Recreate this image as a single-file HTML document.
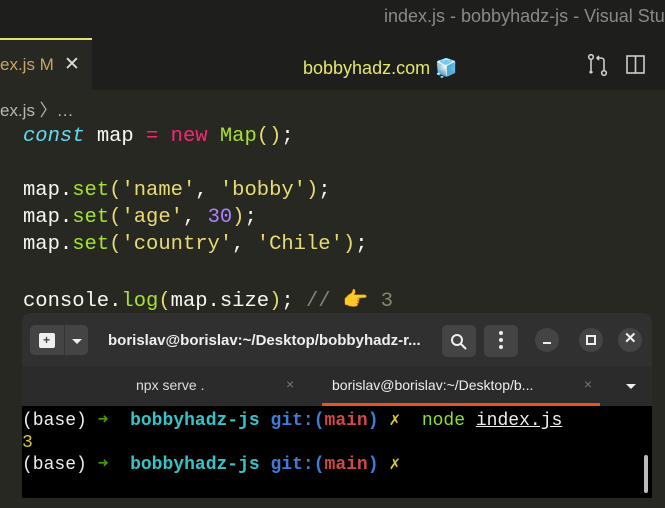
<!DOCTYPE html>
<html><head><style>
body{margin:0;width:665px;height:508px;overflow:hidden;background:#272822;font-family:"Liberation Sans",sans-serif;position:relative}
.abs{position:absolute}
.mono{font-family:"Liberation Mono","DejaVu Sans Mono",monospace}
.code{font-size:20.5px;color:#f8f8f2;white-space:pre;left:23px}
</style></head><body>
<div class="abs" style="left:0;top:0;width:665px;height:38px;background:#1e1f1c"></div>
<div class="abs" style="left:384px;top:6px;font-size:18px;color:#8a8a85;white-space:nowrap">index.js - bobbyhadz-js - Visual Stu</div>
<div class="abs" style="left:0;top:38px;width:665px;height:52px;background:#1e1f1c"></div>
<div class="abs" style="left:0;top:38px;width:92px;height:52px;background:#272822;border-top:2px solid #e2e26a;box-sizing:border-box"></div>
<div class="abs" style="left:0;top:55px;font-size:17px;color:#c9a56a">ex.js&nbsp;M</div>
<div class="abs" style="left:64px;top:53px;font-size:19px;color:#ddd">✕</div>
<div class="abs" style="left:303px;top:58px;font-size:18px;color:#e6e66e">bobbyhadz.com <span style="color:#8cc8ee">🧊</span></div>
<svg class="abs" style="left:586px;top:53px" width="24" height="24" viewBox="0 0 24 24" fill="none" stroke="#ccc" stroke-width="1.6"><circle cx="5" cy="4" r="2.3"/><circle cx="18" cy="20" r="2.3"/><path d="M5 6.5v14M18 17.5V8c0-2-1-3-3-3h-3M13 3l-2 2 2 2M5 20l-1.5-1.5M5 20l1.5-1.5"/></svg>
<svg class="abs" style="left:625px;top:54px" width="22" height="22" viewBox="0 0 22 22" fill="none" stroke="#ccc" stroke-width="1.6"><rect x="2" y="2" width="17" height="17"/><path d="M10.5 2v17"/></svg>
<div class="abs" style="left:0;top:96px;font-size:17px;color:#b8b8b0">ex.js 〉…</div>
<div class="abs mono code" style="top:125px"><span style="color:#66d9ef;font-style:italic">const</span> map <span style="color:#f92672">=</span> <span style="color:#f92672">new</span> <span style="color:#a6e22e">Map</span><span style="color:#e6db74">()</span>;</div>
<div class="abs mono code" style="top:179px">map.<span style="color:#a6e22e">set</span><span style="color:#e6db74">(</span><span style="color:#e6db74">'name'</span>, <span style="color:#e6db74">'bobby'</span><span style="color:#e6db74">)</span>;</div>
<div class="abs mono code" style="top:206px">map.<span style="color:#a6e22e">set</span><span style="color:#e6db74">(</span><span style="color:#e6db74">'age'</span>, <span style="color:#ae81ff">30</span><span style="color:#e6db74">)</span>;</div>
<div class="abs mono code" style="top:233px">map.<span style="color:#a6e22e">set</span><span style="color:#e6db74">(</span><span style="color:#e6db74">'country'</span>, <span style="color:#e6db74">'Chile'</span><span style="color:#e6db74">)</span>;</div>
<div class="abs mono code" style="top:288px">console.<span style="color:#a6e22e">log</span><span style="color:#e6db74">(</span>map.size<span style="color:#e6db74">)</span>; <span style="color:#88846f">// <span style="color:#f5b700">👉</span> 3</span></div>

<div class="abs" style="left:22px;top:313px;width:630px;height:185px;border-radius:8px 8px 0 0;overflow:hidden;background:#000">
 <div class="abs" style="left:0;top:0;width:630px;height:53px;background:#303030"></div>
 <div class="abs" style="left:8px;top:12px;width:58px;height:30px;background:#444;border-radius:5px"></div>
 <div class="abs" style="left:42px;top:12px;width:1px;height:30px;background:#333"></div>
 <div class="abs" style="left:17px;top:20px;width:12px;height:11px;border:2px solid #eee;border-radius:2px;background:#eee"></div>
 <div class="abs" style="left:21px;top:21px;font-size:12px;font-weight:bold;color:#444;line-height:12px">+</div>
 <div class="abs" style="left:50px;top:26px;width:0;height:0;border-left:5px solid transparent;border-right:5px solid transparent;border-top:5px solid #eee"></div>
 <div class="abs" style="left:86px;top:19px;font-size:15px;color:#eee;font-weight:bold;white-space:nowrap">borislav@borislav:~/Desktop/bobbyhadz-r...</div>
 <div class="abs" style="left:420px;top:12px;width:34px;height:32px;background:#444;border-radius:5px"></div>
 <svg class="abs" style="left:428px;top:20px" width="18" height="18" viewBox="0 0 18 18" fill="none" stroke="#eee" stroke-width="2"><circle cx="7" cy="7" r="5"/><path d="M11 11l5 5"/></svg>
 <div class="abs" style="left:462px;top:12px;width:34px;height:32px;background:#444;border-radius:5px"></div>
 <div class="abs" style="left:477px;top:18px;width:4px;height:4px;border-radius:2px;background:#eee;box-shadow:0 7px 0 #eee,0 14px 0 #eee"></div>
 <div class="abs" style="left:513px;top:15px;width:24px;height:24px;border-radius:12px;background:#444"></div>
 <div class="abs" style="left:521px;top:29px;width:8px;height:2px;background:#eee"></div>
 <div class="abs" style="left:557px;top:15px;width:24px;height:24px;border-radius:12px;background:#444"></div>
 <div class="abs" style="left:564px;top:22px;width:6px;height:6px;border:2px solid #eee"></div>
 <div class="abs" style="left:596px;top:15px;width:24px;height:24px;border-radius:12px;background:#444"></div>
 <div class="abs" style="left:602px;top:16px;font-size:15px;font-weight:bold;color:#eee">✕</div>
 <div class="abs" style="left:0;top:53px;width:630px;height:40px;background:#2b2b2b"></div>
 <div class="abs" style="left:114px;top:64px;font-size:14px;color:#ddd">npx serve .</div>
 <div class="abs" style="left:264px;top:63px;font-size:14px;color:#777">×</div>
 <div class="abs" style="left:310px;top:64px;font-size:14px;color:#eee;white-space:nowrap">borislav@borislav:~/Desktop/b...</div>
 <div class="abs" style="left:562px;top:63px;font-size:14px;color:#777">×</div>
 <div class="abs" style="left:604px;top:71px;width:0;height:0;border-left:5px solid transparent;border-right:5px solid transparent;border-top:5px solid #eee"></div>
 <div class="abs" style="left:300px;top:90px;width:278px;height:3px;background:#e95420"></div>
 <div class="abs mono" style="left:0;top:97px;font-size:18px;line-height:22px;color:#eee;white-space:pre">(base) <span style="color:#4e9a06;font-weight:bold">➜</span>  <span style="color:#34c3c8;font-weight:bold">bobbyhadz-js</span> <span style="color:#3f7cd8;font-weight:bold">git:(<span style="color:#d04848">main</span>)</span> <span style="color:#d8c83a">✗</span>  <span style="color:#8ae234">node</span> <u>index.js</u>
<span style="color:#d8c83a">3</span>
(base) <span style="color:#4e9a06;font-weight:bold">➜</span>  <span style="color:#34c3c8;font-weight:bold">bobbyhadz-js</span> <span style="color:#3f7cd8;font-weight:bold">git:(<span style="color:#d04848">main</span>)</span> <span style="color:#d8c83a">✗</span></div>
 <div class="abs" style="left:622px;top:142px;width:4px;height:38px;background:#bbb;border-radius:2px"></div>
</div>
</body></html>
